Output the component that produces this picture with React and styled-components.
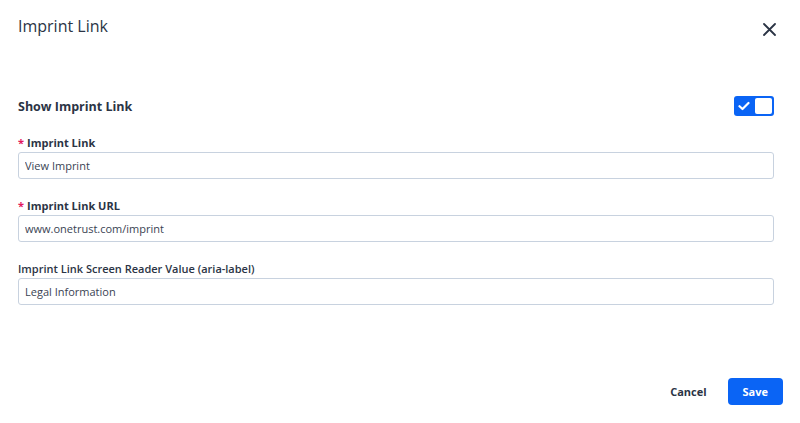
import React from "react";
import styled, { createGlobalStyle } from "styled-components";

const Global = createGlobalStyle`
  html, body { margin: 0; padding: 0; background: #ffffff; }
  body { font-family: "Open Sans", "Noto Sans", sans-serif; color: #2b3445; }
  * { box-sizing: border-box; }
`;

const Dialog = styled.div`
  display: flex;
  flex-direction: column;
  height: 100vh;
  background: #fff;
`;

const Header = styled.header`
  display: flex;
  justify-content: space-between;
  align-items: flex-start;
  padding: 14px 24px 0 18px;
`;

const Title = styled.h2`
  margin: 0;
  font-size: 16px;
  line-height: 24px;
  font-weight: 400;
  color: #2b3445;
`;

const CloseButton = styled.button`
  display: flex;
  padding: 0;
  margin-top: 9px;
  border: none;
  background: none;
  cursor: pointer;
  width: 13px;
  height: 13px;
`;

const Body = styled.main`
  flex: 1;
  display: flex;
  flex-direction: column;
  gap: 19px;
  padding: 58px 26px 0 18px;
`;

const ToggleRow = styled.div`
  display: flex;
  justify-content: space-between;
  align-items: center;
  height: 20px;
`;

const RowLabel = styled.span`
  font-size: 12.5px;
  font-weight: 700;
  color: #2b3445;
`;

const Toggle = styled.button`
  display: flex;
  align-items: center;
  justify-content: space-between;
  width: 40px;
  height: 20px;
  padding: 2px 2px 2px 4px;
  border: none;
  border-radius: 3px;
  background: #0a64f5;
  cursor: pointer;
`;

const Knob = styled.span`
  width: 17px;
  height: 16px;
  border-radius: 2px;
  background: #fff;
`;

const Field = styled.div`
  display: flex;
  flex-direction: column;
  gap: 1px;
`;

const Label = styled.label`
  font-size: 11px;
  line-height: 16px;
  font-weight: ${(p) => (p.$semi ? 600 : 700)};
  color: #2b3445;
`;

const Required = styled.span`
  color: #e3185d;
  margin-right: 3px;
`;

const Input = styled.input`
  height: 27px;
  width: 100%;
  padding: 0 6px;
  border: 1px solid #c8d2df;
  border-radius: 3px;
  font-family: "Open Sans", "Noto Sans", sans-serif;
  font-size: 11px;
  color: #3a4353;
  background: #fff;
  outline: none;
`;

const Footer = styled.footer`
  display: flex;
  justify-content: flex-end;
  align-items: center;
  gap: 11px;
  padding: 0 17px 18px 0;
`;

const Button = styled.button`
  height: 27px;
  padding: 0 ${(p) => (p.$primary ? "15px" : "10px")};
  border: none;
  border-radius: 4px;
  font-family: "Open Sans", "Noto Sans", sans-serif;
  font-size: 11px;
  font-weight: 700;
  cursor: pointer;
  background: ${(p) => (p.$primary ? "#0a64f5" : "transparent")};
  color: ${(p) => (p.$primary ? "#ffffff" : "#2b3445")};
`;

const fields = [
  { label: "Imprint Link", required: true, value: "View Imprint" },
  { label: "Imprint Link URL", required: true, value: "www.onetrust.com/imprint" },
  {
    label: "Imprint Link Screen Reader Value (aria-label)",
    required: false,
    value: "Legal Information",
  },
];

export default function App() {
  return (
    <Dialog>
      <Global />
      <Header>
        <Title>Imprint Link</Title>
        <CloseButton aria-label="Close">
          <svg width="13" height="13" viewBox="0 0 13 13">
            <path
              d="M1 1 L12 12 M12 1 L1 12"
              stroke="#2b3445"
              strokeWidth="1.8"
              strokeLinecap="round"
            />
          </svg>
        </CloseButton>
      </Header>
      <Body>
        <ToggleRow>
          <RowLabel>Show Imprint Link</RowLabel>
          <Toggle aria-pressed="true">
            <svg width="12" height="10" viewBox="0 0 12 10">
              <path
                d="M1.5 5.2 L4.5 8 L10.5 2"
                stroke="#fff"
                strokeWidth="2.2"
                fill="none"
                strokeLinecap="round"
                strokeLinejoin="round"
              />
            </svg>
            <Knob />
          </Toggle>
        </ToggleRow>
        {fields.map((f) => (
          <Field key={f.label}>
            <Label $semi={!f.required}>
              {f.required && <Required>*</Required>}
              {f.label}
            </Label>
            <Input defaultValue={f.value} />
          </Field>
        ))}
      </Body>
      <Footer>
        <Button>Cancel</Button>
        <Button $primary>Save</Button>
      </Footer>
    </Dialog>
  );
}
